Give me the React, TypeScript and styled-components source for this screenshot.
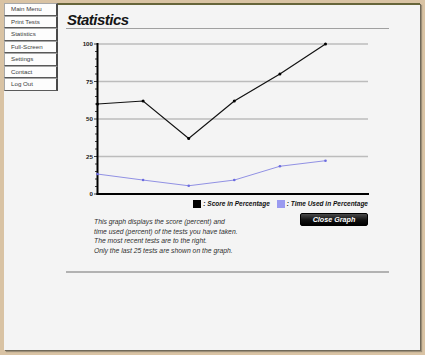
import styled, { createGlobalStyle } from 'styled-components';

const GlobalStyle = createGlobalStyle`
  html, body {
    margin: 0;
    padding: 0;
    background: #d9c3a4;
    font-family: "Liberation Sans", Arial, sans-serif;
  }
  * { box-sizing: border-box; }
`;

const Frame = styled.div`
  width: 425px;
  height: 355px;
  padding: 3px 5px 5px 4px;
`;
const Panel = styled.div`
  display: flex;
  width: 416px;
  height: 347px;
  background: #f4f4f4;
  border-top: 2px solid #66653a;
  box-shadow: 1px 1px 0 #6f6858, 2px 2px 1px #9c8e78;
`;
const Menu = styled.ul`
  list-style: none;
  margin: -2px 0 0 0;
  padding: 0;
  width: 54px;
  display: flex;
  flex-direction: column;
  position: relative;
  z-index: 1;
  align-self: flex-start;
`;
const MenuItem = styled.li`
  height: 12.5px;
  background: #fdfdfd;
  border: 1px solid #a8a8a8;
  border-right: 2px solid #4a4a4a;
  border-bottom: 1px solid #5a5a5a;
  color: #3c3c3c;
  font-size: 6.2px;
  line-height: 10.5px;
  padding-left: 6px;
  white-space: nowrap;
`;
const Main = styled.div`
  display: flex;
  flex-direction: column;
  width: 323px;
  margin-left: 8px;
`;
const Title = styled.h2`
  margin: 0;
  padding: 6px 0 0 1px;
  font-size: 15px;
  line-height: 17px;
  font-weight: 700;
  font-style: italic;
  letter-spacing: -0.5px;
  color: #151515;
  border-bottom: 1px solid #a0a0a0;
`;
const Legend = styled.div`
  display: flex;
  justify-content: flex-end;
  align-items: center;
  height: 9px;
  padding-right: 21px;
  gap: 7px;
`;
const LegendItem = styled.span`
  display: flex;
  align-items: center;
  gap: 2px;
  font-size: 6.5px;
  font-weight: 700;
  font-style: italic;
  color: #111;
`;
const Swatch = styled.span<{ $color: string }>`
  width: 8px;
  height: 8px;
  background: ${(p) => p.$color};
`;
const InfoRow = styled.div`
  display: flex;
  justify-content: space-between;
  align-items: flex-start;
  margin-top: 5px;
  padding: 0 21px 0 28px;
`;
const Description = styled.p`
  margin: 4px 0 0;
  font-size: 6.8px;
  line-height: 9.7px;
  font-style: italic;
  color: #2e2e2e;
`;
const CloseButton = styled.button`
  width: 68px;
  height: 13px;
  padding: 0;
  border: 1px solid #000;
  border-radius: 2px;
  background: linear-gradient(#4a4a4a, #111 55%, #000);
  color: #fff;
  font-family: "Liberation Sans", Arial, sans-serif;
  font-size: 7.2px;
  font-weight: 700;
  font-style: italic;
  line-height: 11px;
`;
const Divider = styled.div`
  height: 2px;
  margin-top: 15px;
  background: #b2b2b2;
`;

const menu = ['Main Menu', 'Print Tests', 'Statistics', 'Full-Screen', 'Settings', 'Contact', 'Log Out'];
const score = [60, 62, 37, 62, 80, 100];
const time = [13.3, 9.3, 5.5, 9.3, 18.5, 22.2];

const X0 = 31.5;
const STEP = 45.6;
const yOf = (v: number) => 165 - 1.5 * v;
const pts = (d: number[]) => d.map((v, i) => `${X0 + i * STEP},${yOf(v)}`).join(' ');

function Chart() {
  const ticks = Array.from({ length: 21 }, (_, i) => i * 5);
  return (
    <svg width="323" height="170" viewBox="0 0 323 170">
      {[25, 50, 75, 100].map((v) => (
        <line key={v} x1="31" x2="302" y1={yOf(v)} y2={yOf(v)} stroke="#bcbcbc" strokeWidth="1.5" />
      ))}
      {ticks.map((v) => (
        <line key={v} x1={v % 25 === 0 ? 28 : 29} x2="31" y1={yOf(v)} y2={yOf(v)} stroke="#111" strokeWidth="0.8" />
      ))}
      {[0, 25, 50, 75, 100].map((v) => (
        <text key={v} x="27" y={yOf(v) + 2} textAnchor="end" fontSize="6.2" fontWeight="700" fill="#1a1a1a" fontFamily="Liberation Sans, Arial, sans-serif">
          {v}
        </text>
      ))}
      <line x1="31.5" x2="31.5" y1="14" y2="166" stroke="#000" strokeWidth="2" />
      <line x1="30.5" x2="303" y1="165" y2="165" stroke="#000" strokeWidth="2" />
      <polyline points={pts(time)} fill="none" stroke="#9191e4" strokeWidth="1" />
      {time.map((v, i) => (
        <circle key={i} cx={X0 + i * STEP} cy={yOf(v)} r="1.3" fill="#6b6be0" />
      ))}
      <polyline points={pts(score)} fill="none" stroke="#111" strokeWidth="1.2" />
      {score.map((v, i) => (
        <circle key={i} cx={X0 + i * STEP} cy={yOf(v)} r="1.5" fill="#000" />
      ))}
    </svg>
  );
}

export default function App() {
  return (
    <>
      <GlobalStyle />
      <Frame>
        <Panel>
          <Menu>
            {menu.map((m) => (
              <MenuItem key={m}>{m}</MenuItem>
            ))}
          </Menu>
          <Main>
            <Title>Statistics</Title>
            <Chart />
            <Legend>
              <LegendItem>
                <Swatch $color="#000" />: Score in Percentage
              </LegendItem>
              <LegendItem>
                <Swatch $color="#9a9af0" />: Time Used in Percentage
              </LegendItem>
            </Legend>
            <InfoRow>
              <Description>
                This graph displays the score (percent) and
                <br />
                time used (percent) of the tests you have taken.
                <br />
                The most recent tests are to the right.
                <br />
                Only the last 25 tests are shown on the graph.
              </Description>
              <CloseButton>Close Graph</CloseButton>
            </InfoRow>
            <Divider />
          </Main>
        </Panel>
      </Frame>
    </>
  );
}
